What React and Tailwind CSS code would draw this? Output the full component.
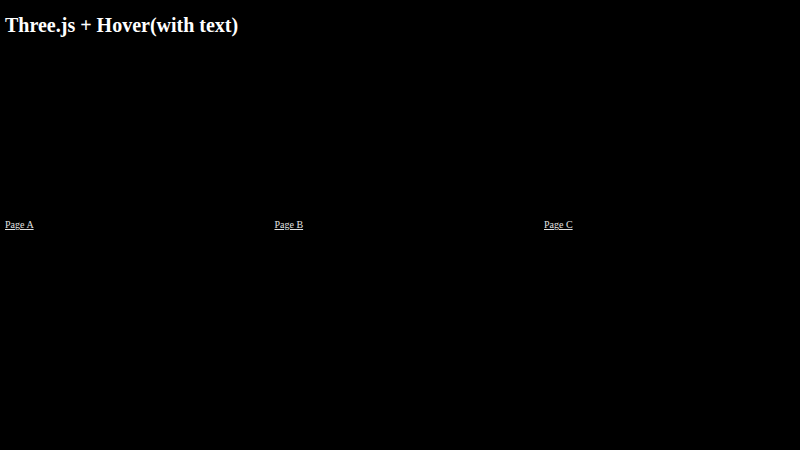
import React from 'react';

const pages = ['Page A', 'Page B', 'Page C'];

const App = () => {
  return (
    <div className="min-h-[450px] bg-black text-white px-[5px] overflow-hidden font-['Liberation_Serif',serif]">
      <h1 className="pt-[13px] text-[20px] leading-[24px] font-bold">Three.js + Hover(with text)</h1>
      <div className="flex mt-[174px]">
        {pages.map((p) => (
          <div key={p} className="w-[269.5px] shrink-0">
            <a href="#" className="text-[10px] leading-[12px] underline text-[#e0e0e0]">{p}</a>
          </div>
        ))}
      </div>
    </div>
  );
};

export default App;
